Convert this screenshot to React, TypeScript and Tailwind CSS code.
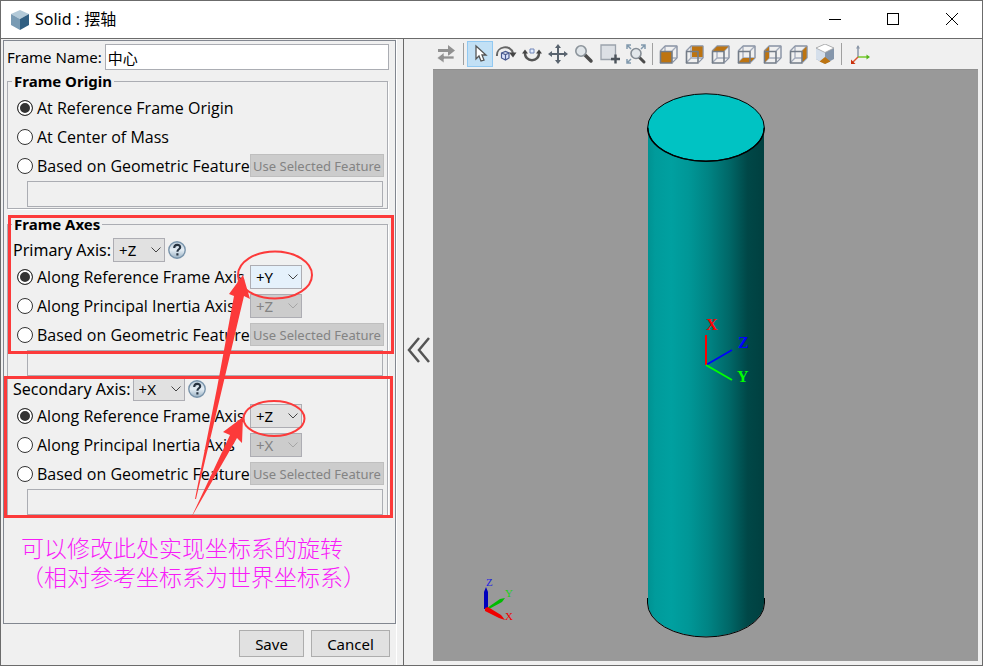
import React from 'react';

const RED = '#fc3a3a';
const STEEL = '#8b97a8';
const ORANGE = '#bd7411';

const selectTones = {
  normal: 'bg-[#e1e1e1] text-black',
  hot: 'bg-[#e5f1fb] text-black',
  disabled: 'bg-[#cccccc] text-[#838383]',
};

type Tone = keyof typeof selectTones;

const AxisSelect: React.FC<{ value: string; label: string; tone?: Tone }> = ({ value, label, tone = 'normal' }) => (
  <span className="relative inline-flex shrink-0">
    <select
      aria-label={label}
      defaultValue={value}
      disabled={tone === 'disabled'}
      className={`h-6 w-[52px] appearance-none border border-[#adadb3] pl-[5px] text-[15px] leading-5 opacity-100 ${selectTones[tone]}`}
    >
      {['+X', '+Y', '+Z', '-X', '-Y', '-Z'].map((axis) => (
        <option key={axis}>{axis}</option>
      ))}
    </select>
    <svg viewBox="0 0 10 6" className="pointer-events-none absolute right-1 top-[9px] h-[6px] w-[10px]" fill="none">
      <path d="M.5.5 5 5 9.5.5" stroke={tone === 'disabled' ? '#a5a5a5' : '#444'} />
    </svg>
  </span>
);

const Radio: React.FC<{ name: string; label: string; checked?: boolean }> = ({ name, label, checked }) => (
  <label className="flex items-center gap-1 whitespace-nowrap font-['Open_Sans',sans-serif] text-base leading-5">
    <input
      type="radio"
      name={name}
      defaultChecked={checked}
      className="size-4 shrink-0 appearance-none rounded-full border border-[#333] bg-white checked:bg-[#333] checked:shadow-[inset_0_0_0_2px_white]"
    />
    {label}
  </label>
);

const FeatureRow: React.FC<{ name: string }> = ({ name }) => (
  <>
    <div className="flex h-[29px] items-center justify-between">
      <Radio name={name} label="Based on Geometric Feature" />
      <button
        disabled
        className="h-[23px] w-[134px] shrink-0 whitespace-nowrap border border-[#bfbfbf] bg-[#cccccc] text-[13px] leading-5 text-[#838383]"
      >
        Use Selected Feature
      </button>
    </div>
    <input
      aria-label="Selected feature"
      readOnly
      className="ml-[10px] mt-px block h-[26px] w-[356px] border border-[#abadb3] bg-[#f0f0f0]"
    />
  </>
);

const HelpIcon = () => (
  <button aria-label="Help">
    <svg viewBox="0 0 18 18" className="size-[18px]">
      <defs>
        <linearGradient id="help" x1="0" y1="0" x2="0" y2="1">
          <stop offset="0" stopColor="#bccbd9" />
          <stop offset=".5" stopColor="#e4edf4" />
          <stop offset="1" stopColor="#9bb2c4" />
        </linearGradient>
      </defs>
      <circle cx="9" cy="9" r="8.2" fill="url(#help)" stroke="#7893aa" strokeWidth="1.4" />
      <path d="M6.2 7c0-4 6-4 6-.7 0 2-2.8 2-2.8 4.4M9.4 12.2v2.2" fill="none" stroke="#26323f" strokeWidth="2.1" />
    </svg>
  </button>
);

type AxisGroupProps = {
  title: string;
  axis: string;
  reference: string;
  inertia: string;
  hot?: boolean;
};

const AxisGroup: React.FC<AxisGroupProps> = ({ title, axis, reference, inertia, hot }) => {
  const name = title.toLowerCase();
  return (
    <div>
      <div className="-ml-1 flex h-[25px] items-end">
        <div className="flex items-center">
          <span className="mr-[2px] text-base leading-5">{title} Axis:</span>
          <AxisSelect value={axis} label={`${title} axis`} />
          <span className="ml-[3px] flex">
            <HelpIcon />
          </span>
        </div>
      </div>
      <div className="flex h-[29px] items-center justify-between pr-[82px]">
        <Radio name={name} label="Along Reference Frame Axis" checked />
        <AxisSelect value={reference} label={`${title} reference axis`} tone={hot ? 'hot' : 'normal'} />
      </div>
      <div className="flex h-[29px] items-center justify-between pr-[82px]">
        <Radio name={name} label="Along Principal Inertia Axis" />
        <AxisSelect value={inertia} label={`${title} inertia axis`} tone="disabled" />
      </div>
      <FeatureRow name={name} />
    </div>
  );
};

// Red boxes, circles and arrows drawn over the form
const Markup = () => (
  <svg width="396" height="310" viewBox="1 211 396 310" className="pointer-events-none absolute left-0 top-[210px]" fill="none" stroke={RED}>
    <rect x="9.5" y="216.5" width="383" height="136" strokeWidth="3" />
    <rect x="5.5" y="377.5" width="386" height="139" strokeWidth="3" />
    <ellipse cx="275" cy="275" rx="37" ry="23.5" strokeWidth="2" />
    <ellipse cx="274" cy="418.5" rx="30.5" ry="17.5" strokeWidth="2" />
    <path d="M195 499 217 388 234 296 229 294 243 275 250 299 244 296 222 389 196 499Z" fill={RED} stroke="none" />
    <path d="M191 518 230 435 223 432 243 417 242 443 237 438Z" fill={RED} stroke="none" />
  </svg>
);

const SettingsPanel = () => (
  <section className="flex w-[395px] shrink-0 flex-col pl-[2px] pt-[1px]">
    <div className="flex-1 border border-[#828790] pl-[3px] pr-[6px] pt-[3px]">
      <label className="flex items-center gap-[3px] whitespace-nowrap">
        Frame Name:
        <input
          defaultValue="中心"
          className="h-[26px] w-full min-w-0 border border-[#abadb3] bg-white px-[2px] text-[15px]"
        />
      </label>

      <fieldset className="mr-[1px] border border-[#abadb3] pb-[1px] pl-[9px] pr-[3px] shadow-[1px_1px_0_white]">
        <legend className="-ml-[5px] px-[2px] font-bold leading-[23px]">Frame Origin</legend>
        <div className="flex h-[29px] items-center">
          <Radio name="origin" label="At Reference Frame Origin" checked />
        </div>
        <div className="flex h-[29px] items-center">
          <Radio name="origin" label="At Center of Mass" />
        </div>
        <FeatureRow name="origin" />
      </fieldset>

      <fieldset className="mr-[1px] mt-1 border border-[#abadb3] pb-[1px] pl-[9px] pr-[3px] shadow-[1px_1px_0_white]">
        <legend className="-ml-[5px] px-[2px] font-bold leading-[23px]">Frame Axes</legend>
        <div className="flex flex-col pt-px">
          <AxisGroup title="Primary" axis="+Z" reference="+Y" inertia="+Z" hot />
          <AxisGroup title="Secondary" axis="+X" reference="+Z" inertia="+X" />
        </div>
      </fieldset>

      <p className="mt-[18px] whitespace-nowrap pl-[14px] font-['Liberation_Serif','Noto_Sans_CJK_SC',serif] text-[23px] font-light leading-[29px] text-[#f81cf8]">
        可以修改此处实现坐标系的旋转
        <br />
        （相对参考坐标系为世界坐标系）
      </p>
    </div>
    <div className="flex justify-end gap-[7px] pb-2 pr-[6px] pt-[6px]">
      <button className="h-[27px] w-[65px] border border-[#adadad] bg-[#e1e1e1]">Save</button>
      <button className="h-[27px] w-[79px] border border-[#adadad] bg-[#e1e1e1]">Cancel</button>
    </div>
  </section>
);

// Wireframe cube with one highlighted face
const faces: Record<string, string> = {
  Front: 'M1 7H13V19H1Z',
  Back: 'M7 2H18V13H7Z',
  Top: 'M1 7 6 2H18L13 7Z',
  Bottom: 'M1 19 6 14H18L13 19Z',
  Left: 'M1 7 6 2V14L1 19Z',
  Right: 'M13 7 18 2V14L13 19Z',
};

const CubeIcon: React.FC<{ face: string }> = ({ face }) => (
  <svg viewBox="0 0 20 20" className="size-5" fill="none" strokeLinejoin="round">
    <path d="M6 2H18V14H6ZM1 7 6 2M13 7 18 2M13 19 18 14M1 19 6 14" stroke="#a2aaba" strokeWidth="1.3" />
    <path d={faces[face]} fill={ORANGE} />
    <path d="M1.5 7.5H13V19H1.5Z" stroke="#737c88" strokeWidth="1.6" />
    <path d="M1.5 7 6 2H18V14L13 19" stroke="#8d96a5" />
  </svg>
);

const tools: { label: string; icon: React.ReactNode; active?: boolean }[] = [
  {
    label: 'Select',
    active: true,
    icon: <path d="M6 2V15L9 12 11 17 14 16 12 11H16Z" fill="white" stroke="#555" strokeWidth="1.3" />,
  },
  {
    label: 'Rotate',
    icon: (
      <>
        <path d="M1 12C0 2 15 0 17 9" stroke="#666" strokeWidth="2" />
        <path d="M13 8.5H20.5L17 13.5Z" fill="#444" />
        <path d="M5.5 9 9.5 7.5 13 9V14L9.5 16 5.5 14ZM5.5 9 9.5 10.5 13 9M9.5 10.5V16" fill="#dce4fc" stroke="#48598f" strokeWidth="1.2" />
      </>
    ),
  },
  {
    label: 'Roll',
    icon: (
      <>
        <path d="M3 8C2 19 18 19 17 8" stroke="#555" strokeWidth="2.4" />
        <path d="M0 9.5 3 5.5 6 9.5ZM14 9.5 17 5.5 20 9.5Z" fill="#444" />
        <path d="M8 5H12V9H8Z" fill="#e4edff" stroke="#7085b6" />
      </>
    ),
  },
  {
    label: 'Pan',
    icon: (
      <>
        <path d="M10 3V17M3 10H17" stroke="#59636e" strokeWidth="2" />
        <path d="M10 0 13 4H7ZM10 20 7 16H13ZM0 10 4 7V13ZM20 10 16 13V7Z" fill="#59636e" />
      </>
    ),
  },
  {
    label: 'Zoom',
    icon: (
      <>
        <path d="M11 11 17 17" stroke="#4c4c4c" strokeWidth="3.5" strokeLinecap="round" />
        <circle cx="7" cy="7" r="5.2" fill="#e0e5e9" stroke="#8c949b" strokeWidth="1.6" />
      </>
    ),
  },
  {
    label: 'Zoom to region',
    icon: (
      <>
        <path d="M1 1H15.500V15.500H1Z" fill="#dce0e5" stroke="#9ba3ac" strokeWidth="1.3" />
        <path d="M15.5 10.500V19.500M11 15H20" stroke="#4b535b" strokeWidth="2.4" />
      </>
    ),
  },
  {
    label: 'Fit to view',
    icon: (
      <>
        <path d="M1 5V1H5M15 1H19V5M1 15V19H5M1 1 5 5M19 1 15 5M1 19 5 15" stroke="#8199ad" strokeWidth="1.5" />
        <path d="M13 13 18 18" stroke="#4c4c4c" strokeWidth="3" strokeLinecap="round" />
        <circle cx="10" cy="9.5" r="5" fill="#e2e7eb" stroke="#858d95" strokeWidth="1.6" />
      </>
    ),
  },
];

const Separator = () => <span className="mx-[3px] h-[22px] w-px shrink-0 bg-[#a0a0a0]" />;

const Toolbar = () => (
  <div className="flex h-[30px] shrink-0 items-center">
    <button aria-label="Swap" className="mr-px flex size-[26px] shrink-0 items-center justify-center">
      <svg viewBox="0 0 20 20" className="size-5" fill="#919191">
        <path d="M2 5H12V1L19 6.500 12 12V8H2Z" />
        <path d="M18 12H8V8.5L1 14 8 19V15H18Z" stroke="#f0f0f0" strokeWidth=".7" />
      </svg>
    </button>
    <Separator />
    {tools.map(({ label, icon, active }) => (
      <button
        key={label}
        aria-label={label}
        className={`flex size-[26px] shrink-0 items-center justify-center ${active ? 'border border-[#92c9f2] bg-[#c2e0f5]' : ''}`}
      >
        <svg viewBox="0 0 20 20" className="size-5 shrink-0 overflow-visible" fill="none">
          {icon}
        </svg>
      </button>
    ))}
    <Separator />
    {Object.keys(faces).map((face) => (
      <button key={face} aria-label={`${face} view`} className="flex size-[26px] shrink-0 items-center justify-center">
        <CubeIcon face={face} />
      </button>
    ))}
    <button aria-label="Isometric view" className="flex size-[26px] shrink-0 items-center justify-center">
      <svg viewBox="0 0 20 20" className="size-5">
        <path d="M10 0 19 4V15L10 20 1 15V4Z" fill="#8596ab" />
        <path d="M1 4 10 8V20L1 15Z" fill="#d5dfeb" />
        <path d="M10 0 19 4 10 8.500 1 4Z" fill="white" stroke="#a5a5a5" strokeWidth=".8" />
        <path d="M10 13 15.500 17.500 10 20 4.500 17.500Z" fill={ORANGE} />
      </svg>
    </button>
    <Separator />
    <button aria-label="Show frames" className="flex h-[26px] w-[30px] shrink-0 items-center justify-center">
      <svg viewBox="0 0 20 20" className="size-5 overflow-visible" fill="none" strokeWidth="1.5">
        <path d="M8 13V2" stroke={STEEL} />
        <path d="M8 1 10 4.500H6Z" fill={STEEL} />
        <path d="M8 13H18" stroke="#78ca2c" />
        <path d="M16.5 10.500 20 13 16.5 15.500Z" fill="#55b71b" />
        <path d="M8 13 3 18" stroke="#db5631" />
        <path d="M1 15.500V20H5.500Z" fill="#c9300c" />
      </svg>
    </button>
  </div>
);

const Viewport = () => (
  <div className="flex min-h-0 flex-1 overflow-hidden border-t border-[#909090] bg-[#999999]">
    <svg width="545" height="591" viewBox="433 70 545 591" className="shrink-0">
      <defs>
        <linearGradient id="body">
          <stop offset="0" stopColor="#009292" />
          <stop offset=".06" stopColor="#009b9b" />
          <stop offset=".2" stopColor="#00a0a0" />
          <stop offset=".35" stopColor="#009797" />
          <stop offset=".52" stopColor="#008484" />
          <stop offset=".7" stopColor="#006868" />
          <stop offset=".86" stopColor="#004747" />
          <stop offset="1" stopColor="#004040" />
        </linearGradient>
      </defs>
      <path d="M648 128V603A58 33.5 0 0 0 764 603V128Z" fill="url(#body)" />
      <path d="M647.5 598V603A58.5 34 0 0 0 764.5 603V598" fill="none" stroke="black" />
      <ellipse cx="706" cy="127.5" rx="58.3" ry="33.7" fill="#00c3c3" stroke="black" />
      <path d="M647.7 127.5A58.3 33.7 0 0 0 764.3 127.5" fill="none" stroke="black" strokeWidth="1.5" />

      <g fill="none" strokeWidth="2">
        <path d="M706 365 732 350" stroke="#0000ff" strokeWidth="1.5" />
        <path d="M706 335V365" stroke="#ff0000" />
        <path d="M706 365 732 380" stroke="#00ff00" />
      </g>
      <g className="font-['Liberation_Serif',serif] text-base font-bold">
        <text x="706" y="330" fill="#ff0000">X</text>
        <text x="738" y="348" fill="#0000ff">Z</text>
        <text x="737" y="382" fill="#00ff00">Y</text>
      </g>

      <path d="M484 609V592L486 587 488 592V609Z" fill="#0000bd" />
      <path d="M487 608 500 599 505 598 502 602 489 609Z" fill="#00bc00" />
      <path d="M485 608 488 607 501 615 505 620 499 618 485 611Z" fill="#ef0000" />
      <g className="font-['Liberation_Serif',serif] text-[11px]">
        <text x="486" y="586" fill="#2222e0">Z</text>
        <text x="505" y="597" fill="#18d018">Y</text>
        <text x="505" y="620" fill="#f00000">X</text>
      </g>
    </svg>
  </div>
);

const TitleBar = () => (
  <header className="flex h-[38px] shrink-0 items-center border-b border-[#6b6b6b] bg-white pl-[10px]">
    <svg viewBox="0 0 18 20" className="mr-[6px] h-5 w-[18px]">
      <path d="M9 0 18 4 9 9 0 4Z" fill="#b2c9d8" />
      <path d="M0 4 9 9V20L0 15Z" fill="#799bb4" />
      <path d="M18 4 9 9V20L18 15Z" fill="#315f82" />
    </svg>
    <h1 className="flex-1 pb-px text-base leading-5">Solid : 摆轴</h1>
    <div className="flex pb-px">
      <button aria-label="Minimize" className="flex h-9 w-[59px] items-center justify-center">
        <span className="h-px w-3 bg-black" />
      </button>
      <button aria-label="Maximize" className="flex h-9 w-[58px] items-center justify-center">
        <span className="size-3 border border-black" />
      </button>
      <button aria-label="Close" className="flex h-9 w-[60px] items-center justify-center">
        <svg viewBox="0 0 12 12" className="size-3" stroke="black">
          <path d="M0 0 12 12M12 0 0 12" />
        </svg>
      </button>
    </div>
  </header>
);

const App = () => (
  <main className="relative flex h-screen flex-col overflow-hidden border border-[#6b6b6b] bg-[#f0f0f0] font-['Noto_Sans','Noto_Sans_CJK_SC',sans-serif] text-[15px] leading-5 text-black">
    <TitleBar />
    <div className="flex min-h-0 flex-1">
      <SettingsPanel />
      <div className="w-2 shrink-0 border-l border-r border-l-white border-r-[#696969]" />
      <button aria-label="Collapse panel" className="flex w-[29px] shrink-0 items-center justify-center pb-1">
        <svg viewBox="0 0 24 28" className="h-7 w-6" fill="none" stroke="#555" strokeWidth="2.5">
          <path d="M12 2 2 14 12 26M22 2 12 14 22 26" />
        </svg>
      </button>
      <section className="flex min-w-0 flex-1 flex-col pb-1 pr-1">
        <Toolbar />
        <Viewport />
      </section>
    </div>
    <Markup />
  </main>
);

export default App;
